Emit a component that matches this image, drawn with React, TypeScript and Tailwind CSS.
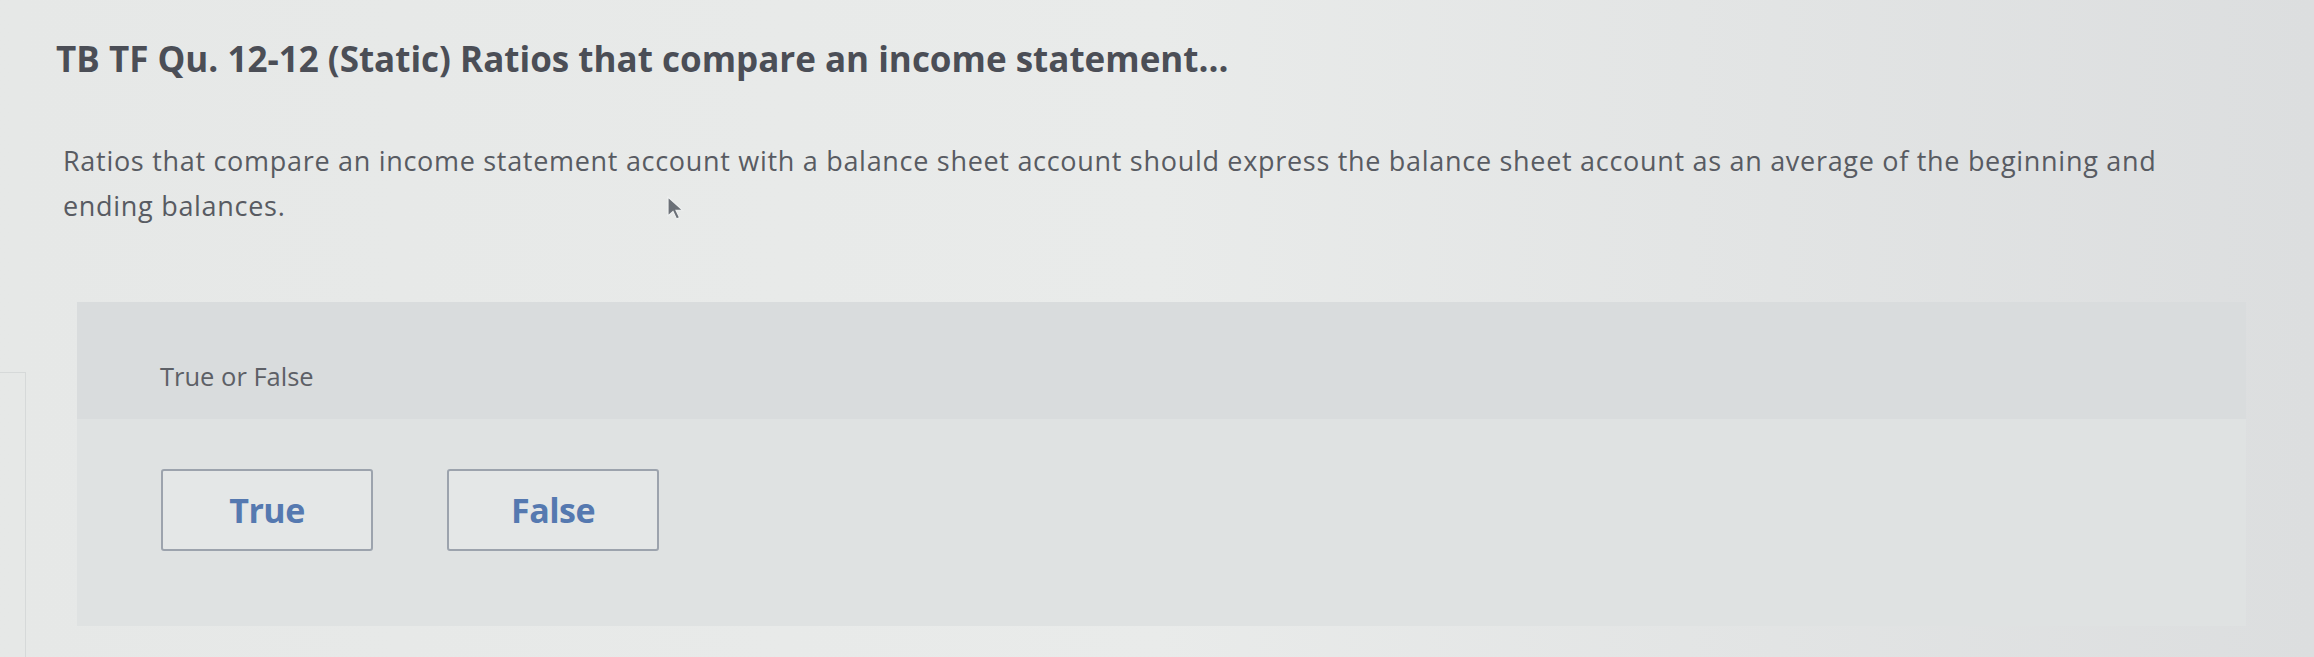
import { useState } from "react";

type Choice = "True" | "False" | null;

function Cursor() {
  return (
    <svg
      className="absolute left-[666px] top-[196px]"
      width="20"
      height="26"
      viewBox="0 0 20 26"
    >
      <path
        d="M2 1 L2 20 L7 15.5 L10.5 23 L13.5 21.6 L10 14.3 L16.5 14 Z"
        fill="#6b7077"
        stroke="#eef0f0"
        strokeWidth="1.2"
      />
    </svg>
  );
}

export default function App() {
  const [choice, setChoice] = useState<Choice>(null);

  return (
    <div
      className="relative w-[2314px] h-[657px] overflow-hidden bg-linear-to-r from-[#e6e8e7] via-[#e9ebea] to-[#dcdedf]"
      style={{ fontFamily: "'Open Sans', Lato, sans-serif" }}
    >
      {/* faint sidebar outline on the left edge */}
      <div className="absolute left-0 top-[372px] h-[300px] w-[26px] border-r border-t border-[#d6d9d9]" />

      <div className="pl-[56px] pt-[38px]">
        <h1 className="text-[35px] leading-[42px] font-bold text-[#4b4e56]">
          TB TF Qu. 12-12 (Static) Ratios that compare an income statement...
        </h1>

        <p className="mt-[58px] ml-[7px] w-[2150px] text-[27px] leading-[45px] text-[#585b62] tracking-[0.7px]">
          Ratios that compare an income statement account with a balance sheet
          account should express the balance sheet account as an average of the
          beginning and ending balances.
        </p>
      </div>

      <section className="mt-[74px] ml-[77px] w-[2169px] bg-[#dfe2e2]">
        <div className="h-[117px] pl-[83px] pt-[56px] bg-[#d9dcdd]">
          <span className="text-[25.5px] leading-[36px] text-[#5d6066]">
            True or False
          </span>
        </div>
        <div className="h-[207px] pl-[84px] pt-[50px] flex items-start gap-[74px]">
          {(["True", "False"] as const).map((label) => (
            <button
              key={label}
              onClick={() => setChoice(label)}
              className={`w-[212px] h-[82px] rounded-[3px] border-2 border-[#9ca3ad] text-[34px] font-bold text-[#5579b0] tracking-[-0.5px] ${
                choice === label ? "bg-[#d3dcea]" : "bg-[#e4e7e7]"
              }`}
            >
              {label}
            </button>
          ))}
        </div>
      </section>

      <Cursor />
    </div>
  );
}
